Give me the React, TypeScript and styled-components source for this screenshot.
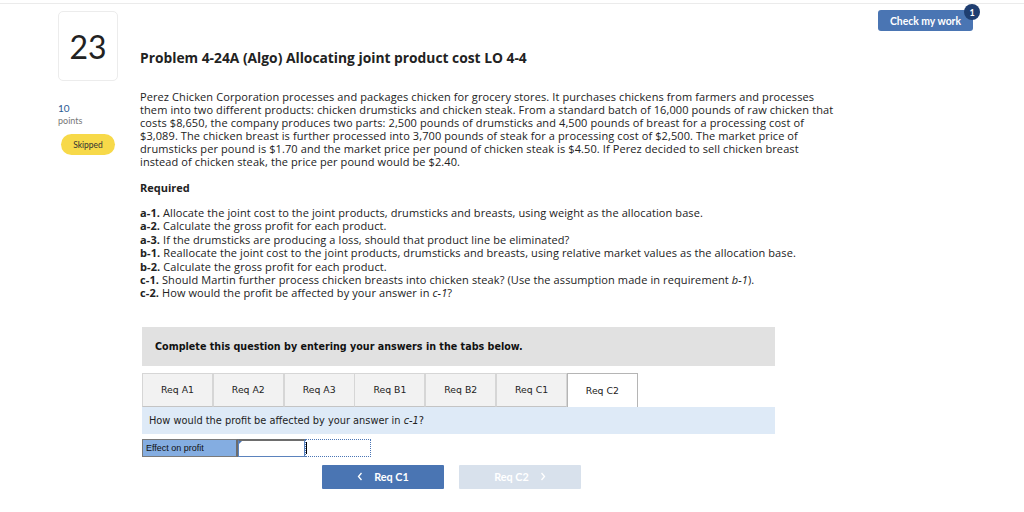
import React from "react";
import styled, { createGlobalStyle } from "styled-components";

const Global = createGlobalStyle`
  html, body { margin: 0; padding: 0; background: #fff; }
  body { font-family: "Open Sans", Lato, Arial, sans-serif; color: #222; }
`;

const TopRule = styled.div`
  height: 3px;
  border-bottom: 1px solid #ebebeb;
`;

const Page = styled.div`
  display: flex;
  align-items: flex-start;
`;

const LeftCol = styled.div`
  width: 60px;
  margin-left: 58px;
  padding-top: 7px;
  display: flex;
  flex-direction: column;
  align-items: flex-start;
  font-family: Lato, "Open Sans", sans-serif;
`;

const NumberBox = styled.div`
  width: 58px;
  height: 68px;
  border: 1px solid #ececec;
  border-radius: 5px;
  display: flex;
  align-items: center;
  justify-content: center;
  font-size: 32px;
  font-weight: 400;
  color: #222;
`;

const Points = styled.div`
  margin-top: 21px;
  font-size: 10px;
  line-height: 12px;
  color: #2b5a95;
`;

const PointsLabel = styled.div`
  font-size: 9px;
  line-height: 12px;
  color: #777;
  margin-top: 1px;
`;

const Skipped = styled.div`
  margin-top: 7px;
  margin-left: 3px;
  width: 54px;
  height: 21px;
  border-radius: 11px;
  background: #f7d949;
  display: flex;
  align-items: center;
  justify-content: center;
  font-size: 8.5px;
  color: #333;
`;

const Main = styled.div`
  margin-left: 22px;
  padding-top: 46px;
  width: 700px;
`;

const Title = styled.h1`
  margin: 0;
  font-size: 13.8px;
  line-height: 16px;
  font-weight: 700;
  color: #222;
  white-space: nowrap;
`;

const Para = styled.p`
  margin: 24px 0 0;
  font-size: 11px;
  line-height: 13px;
  letter-spacing: 0.1px;
  color: #222;
  white-space: nowrap;
`;

const Required = styled.div`
  margin-top: 13px;
  font-size: 11px;
  line-height: 13px;
  font-weight: 700;
`;

const ReqList = styled.div`
  margin-top: 12px;
  font-size: 11px;
  line-height: 13.4px;
  letter-spacing: 0.1px;
  white-space: nowrap;
  b { font-weight: 700; }
`;

const ReqItem = styled.div``;

const Workspace = styled.div`
  margin-top: 27px;
  margin-left: 2px;
  width: 633px;
`;

const Instruction = styled.div`
  height: 39px;
  background: #e1e1e1;
  display: flex;
  align-items: center;
  padding-left: 13px;
  font-family: Verdana, "DejaVu Sans", sans-serif;
  font-size: 9.6px;
  font-weight: 700;
  color: #111;
`;

const Tabs = styled.div`
  margin-top: 7px;
  display: flex;
  height: 34px;
`;

const Tab = styled.div<{ $active?: boolean }>`
  width: 71px;
  box-sizing: border-box;
  display: flex;
  align-items: center;
  justify-content: center;
  font-family: Verdana, "DejaVu Sans", sans-serif;
  font-size: 9.3px;
  color: #222;
  background: ${(p) => (p.$active ? "#fff" : "#f2f2f2")};
  border: 1px solid ${(p) => (p.$active ? "#b5b5b5" : "#d6d6d6")};
  border-bottom: ${(p) => (p.$active ? "none" : "1px solid #c4c4c4")};
  margin-right: -0.2px;
`;

const Question = styled.div`
  height: 27px;
  background: #deeaf7;
  display: flex;
  align-items: center;
  padding-left: 7px;
  font-family: Verdana, "DejaVu Sans", sans-serif;
  font-size: 9.8px;
  color: #222;
  i { font-style: italic; }
`;

const AnswerRow = styled.div`
  margin-top: 5px;
  display: flex;
  height: 18px;
`;

const AnswerLabel = styled.div`
  width: 96px;
  box-sizing: border-box;
  background: #84ade1;
  border: 1px solid #7a7a7a;
  border-right: 2px solid #6c6c6c;
  font-family: "Liberation Sans", Arial, sans-serif;
  font-size: 9px;
  color: #111;
  display: flex;
  align-items: center;
  padding-left: 3px;
`;

const AnswerInput = styled.div`
  position: relative;
  width: 67px;
  box-sizing: border-box;
  background: #fff;
  border: 1px solid #5b83bd;
  border-top: 2px solid #6d6d6d;
  &::before {
    content: "";
    position: absolute;
    left: 0;
    top: 0;
    border-top: 3px solid #4a75b5;
    border-right: 3px solid transparent;
  }
`;

const AnswerDotted = styled.div`
  position: relative;
  width: 66px;
  box-sizing: border-box;
  border: 1px dotted #4a75b5;
  &::before {
    content: "";
    position: absolute;
    left: 0;
    top: 2px;
    bottom: 2px;
    width: 1px;
    background: #000;
  }
`;

const NavRow = styled.div`
  margin-top: 8px;
  margin-left: 180px;
  display: flex;
  gap: 15px;
  font-family: Lato, "Open Sans", sans-serif;
`;

const NavButton = styled.div<{ $disabled?: boolean }>`
  width: 122px;
  height: 24px;
  background: ${(p) => (p.$disabled ? "#d8e1ec" : "#4a75b3")};
  border-radius: 1px;
  display: flex;
  align-items: center;
  justify-content: center;
  gap: 11px;
  color: #fff;
  font-size: 10.8px;
  font-weight: 700;
`;

const RightCol = styled.div`
  margin-left: auto;
  margin-right: 51px;
  padding-top: 6px;
  font-family: Lato, "Open Sans", sans-serif;
`;

const CheckButton = styled.div`
  position: relative;
  width: 95px;
  height: 21px;
  border-radius: 3px;
  background: #4a75b3;
  color: #fff;
  font-size: 10.4px;
  font-weight: 700;
  display: flex;
  align-items: center;
  justify-content: center;
`;

const Badge = styled.div`
  position: absolute;
  top: -6px;
  right: -7px;
  width: 16px;
  height: 16px;
  border-radius: 50%;
  background: #1f3e70;
  color: #fff;
  font-size: 9px;
  font-weight: 700;
  display: flex;
  align-items: center;
  justify-content: center;
`;

const Chevron = ({ dir }: { dir: "left" | "right" }) => (
  <svg width="6" height="9" viewBox="0 0 6 9">
    <path
      d={dir === "left" ? "M4.5 1 L1.5 4.5 L4.5 8" : "M1.5 1 L4.5 4.5 L1.5 8"}
      fill="none"
      stroke="#fff"
      strokeWidth="1.3"
    />
  </svg>
);

const tabs = ["Req A1", "Req A2", "Req A3", "Req B1", "Req B2", "Req C1", "Req C2"];

export default function App() {
  return (
    <>
      <Global />
      <TopRule />
      <Page>
        <LeftCol>
          <NumberBox>23</NumberBox>
          <Points>10</Points>
          <PointsLabel>points</PointsLabel>
          <Skipped>Skipped</Skipped>
        </LeftCol>
        <Main>
          <Title>Problem 4-24A (Algo) Allocating joint product cost LO 4-4</Title>
          <Para>
            Perez Chicken Corporation processes and packages chicken for grocery stores. It purchases chickens from farmers and processes
            <br />
            them into two different products: chicken drumsticks and chicken steak. From a standard batch of 16,000 pounds of raw chicken that
            <br />
            costs $8,650, the company produces two parts: 2,500 pounds of drumsticks and 4,500 pounds of breast for a processing cost of
            <br />
            $3,089. The chicken breast is further processed into 3,700 pounds of steak for a processing cost of $2,500. The market price of
            <br />
            drumsticks per pound is $1.70 and the market price per pound of chicken steak is $4.50. If Perez decided to sell chicken breast
            <br />
            instead of chicken steak, the price per pound would be $2.40.
          </Para>
          <Required>Required</Required>
          <ReqList>
            <ReqItem><b>a-1.</b> Allocate the joint cost to the joint products, drumsticks and breasts, using weight as the allocation base.</ReqItem>
            <ReqItem><b>a-2.</b> Calculate the gross profit for each product.</ReqItem>
            <ReqItem><b>a-3.</b> If the drumsticks are producing a loss, should that product line be eliminated?</ReqItem>
            <ReqItem><b>b-1.</b> Reallocate the joint cost to the joint products, drumsticks and breasts, using relative market values as the allocation base.</ReqItem>
            <ReqItem><b>b-2.</b> Calculate the gross profit for each product.</ReqItem>
            <ReqItem><b>c-1.</b> Should Martin further process chicken breasts into chicken steak? (Use the assumption made in requirement <i>b-1</i>).</ReqItem>
            <ReqItem><b>c-2.</b> How would the profit be affected by your answer in <i>c-1</i>?</ReqItem>
          </ReqList>
          <Workspace>
            <Instruction>Complete this question by entering your answers in the tabs below.</Instruction>
            <Tabs>
              {tabs.map((t) => (
                <Tab key={t} $active={t === "Req C2"}>{t}</Tab>
              ))}
            </Tabs>
            <Question>
              How would the profit be affected by your answer in&nbsp;<i>c-1</i>?
            </Question>
            <AnswerRow>
              <AnswerLabel>Effect on profit</AnswerLabel>
              <AnswerInput />
              <AnswerDotted />
            </AnswerRow>
            <NavRow>
              <NavButton>
                <Chevron dir="left" />
                <span>Req C1</span>
              </NavButton>
              <NavButton $disabled>
                <span>Req C2</span>
                <Chevron dir="right" />
              </NavButton>
            </NavRow>
          </Workspace>
        </Main>
        <RightCol>
          <CheckButton>
            Check my work
            <Badge>1</Badge>
          </CheckButton>
        </RightCol>
      </Page>
    </>
  );
}
